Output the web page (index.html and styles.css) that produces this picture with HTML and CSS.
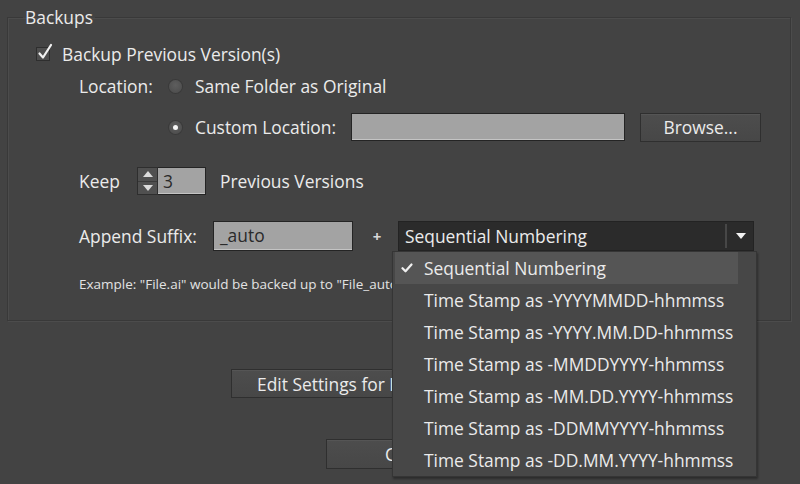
FILE: index.html
```html
<!DOCTYPE html>
<html>
<head>
<meta charset="utf-8">
<link rel="stylesheet" href="styles.css">
</head>
<body>
<fieldset class="group">
  <legend class="group-title">Backups</legend>
  <div class="row row-check">
    <span class="checkbox"><svg class="check-svg" width="18" height="20" viewBox="0 0 18 20"><path d="M3.5 11.5 L7 15.5 L15 3" fill="none" stroke="#f2f2f2" stroke-width="2.2" stroke-linecap="round" stroke-linejoin="round"/></svg></span>
    <span>Backup Previous Version(s)</span>
  </div>
  <div class="row row-loc1">
    <span class="loc-label">Location:</span>
    <span class="radio"></span>
    <span>Same Folder as Original</span>
  </div>
  <div class="row row-loc2">
    <span class="loc-label"></span>
    <span class="radio selected"></span>
    <span class="custom-label">Custom Location:</span>
    <span class="input path-input"></span>
    <span class="button browse">Browse...</span>
  </div>
  <div class="row row-keep">
    <span class="keep-label">Keep</span>
    <span class="spinner">
      <span class="spin-arrows">
        <span class="spin spin-up"></span>
        <span class="spin spin-down"></span>
      </span>
      <span class="input spin-input">3</span>
    </span>
    <span>Previous Versions</span>
  </div>
  <div class="row row-suffix">
    <span class="suffix-label">Append Suffix:</span>
    <span class="input suffix-input">_auto</span>
    <span class="plus">+</span>
    <div class="dropdown">
      <span class="dropdown-value">Sequential Numbering</span>
      <span class="dropdown-sep"></span>
      <span class="dropdown-arrow"></span>
      <ul class="menu">
        <li class="menu-item selected"><span class="menu-check"><svg width="12" height="10" viewBox="0 0 12 10"><path d="M1.5 5.2 L4.5 8.3 L10.5 1.5" fill="none" stroke="#f0f0f0" stroke-width="2.2" stroke-linecap="round" stroke-linejoin="round"/></svg></span>Sequential Numbering</li>
        <li class="menu-item">Time Stamp as -YYYYMMDD-hhmmss</li>
        <li class="menu-item">Time Stamp as -YYYY.MM.DD-hhmmss</li>
        <li class="menu-item">Time Stamp as -MMDDYYYY-hhmmss</li>
        <li class="menu-item">Time Stamp as -MM.DD.YYYY-hhmmss</li>
        <li class="menu-item">Time Stamp as -DDMMYYYY-hhmmss</li>
        <li class="menu-item">Time Stamp as -DD.MM.YYYY-hhmmss</li>
      </ul>
    </div>
  </div>
  <div class="row example">Example: "File.ai" would be backed up to "File_auto-1.ai"</div>
</fieldset>
<div class="actions">
  <div class="button edit-btn">Edit Settings for Document Recovery...</div>
  <div class="button clear-btn">Clear</div>
</div>
</body>
</html>
```
FILE: styles.css
```css
html, body {
  margin: 0;
  padding: 0;
}
body {
  width: 800px;
  height: 484px;
  overflow: hidden;
  background: #434343;
  font-family: "Open Sans", "Liberation Sans", sans-serif;
  font-size: 17.4px;
  color: #ebebeb;
}
.group {
  margin: 7px 9px 0 7px;
  padding: 0 0 24px 0;
  border: 1px solid #393939;
  box-shadow: 1px 1px 0 #4c4c4c, inset 1px 1px 0 #4c4c4c;
  min-width: 0;
}
.group-title {
  margin-left: 15px;
  padding: 0 2px;
  line-height: 20px;
  font-size: 17.4px;
}
.row {
  display: flex;
  align-items: center;
  height: 28px;
  white-space: nowrap;
}
.row-check {
  margin-top: 13px;
  padding-left: 28px;
}
.checkbox {
  position: relative;
  width: 12px;
  height: 12px;
  border: 1px solid #2e2e2e;
  background: #4e4e4e;
  margin-right: 12px;
}
.check-svg {
  position: absolute;
  left: -1px;
  top: -6px;
}
.row-loc1 {
  margin-top: 4px;
  padding-left: 71px;
}
.row-loc2 {
  margin-top: 13px;
  padding-left: 71px;
}
.loc-label {
  width: 90px;
  flex: none;
}
.radio {
  width: 13px;
  height: 13px;
  border-radius: 50%;
  background: radial-gradient(circle at 50% 40%, #5e5e5e, #4a4a4a);
  box-shadow: 0 0 0 1px #3a3a3a;
  margin-right: 13px;
  flex: none;
  display: flex;
  align-items: center;
  justify-content: center;
}
.radio.selected::after {
  content: "";
  width: 5px;
  height: 5px;
  border-radius: 50%;
  background: #f4f4f4;
}
.custom-label {
  width: 156px;
  flex: none;
}
.input {
  box-sizing: border-box;
  background: #a3a3a3;
  border: 1px solid #242424;
  box-shadow: inset 0 -1px 0 #c4c4c4;
  color: #2a2a2a;
  flex: none;
}
.path-input {
  width: 274px;
  height: 28px;
  margin-right: 15px;
}
.button {
  box-sizing: border-box;
  background: linear-gradient(#4d4d4d, #474747);
  border: 1px solid #2f2f2f;
  box-shadow: inset 0 1px 0 #555555;
  color: #ebebeb;
  display: flex;
  align-items: center;
  flex: none;
  white-space: nowrap;
}
.browse {
  width: 121px;
  height: 29px;
  justify-content: center;
}
.row-keep {
  margin-top: 26px;
  padding-left: 71px;
}
.keep-label {
  width: 58px;
  flex: none;
}
.spinner {
  display: flex;
  height: 28px;
  margin-right: 14px;
  flex: none;
}
.spin-arrows {
  display: flex;
  flex-direction: column;
  width: 21px;
  box-sizing: border-box;
  border: 1px solid #2e2e2e;
  background: #505050;
}
.spin {
  flex: 1;
  display: flex;
  align-items: center;
  justify-content: center;
}
.spin-up {
  border-bottom: 1px solid #3a3a3a;
}
.spin-up::after {
  content: "";
  border-left: 5px solid transparent;
  border-right: 5px solid transparent;
  border-bottom: 6px solid #dcdcdc;
}
.spin-down::after {
  content: "";
  border-left: 5px solid transparent;
  border-right: 5px solid transparent;
  border-top: 6px solid #dcdcdc;
}
.spin-input {
  width: 48px;
  height: 28px;
  padding-left: 5px;
  line-height: 26px;
  border-left: none;
}
.row-suffix {
  margin-top: 26px;
  padding-left: 71px;
  height: 30px;
}
.suffix-label {
  width: 134px;
  flex: none;
}
.suffix-input {
  width: 140px;
  height: 30px;
  padding-left: 6px;
  line-height: 27px;
}
.plus {
  width: 45px;
  box-sizing: border-box;
  padding-left: 3px;
  text-align: center;
  font-size: 15px;
  font-weight: bold;
  color: #d8d8d8;
  flex: none;
}
.dropdown {
  position: relative;
  box-sizing: border-box;
  width: 356px;
  height: 30px;
  background: #2b2b2b;
  border: 1px solid #232323;
  display: flex;
  align-items: center;
  flex: none;
}
.dropdown-value {
  flex: 1;
  padding-left: 6px;
}
.dropdown-sep {
  width: 2px;
  height: 24px;
  background: #474747;
  margin-right: 9px;
}
.dropdown-arrow {
  width: 0;
  height: 0;
  border-left: 5px solid transparent;
  border-right: 5px solid transparent;
  border-top: 6px solid #f2f2f2;
  margin-right: 7px;
}
.menu {
  position: absolute;
  z-index: 10;
  left: -7px;
  top: calc(100% + 1px);
  width: 365px;
  box-sizing: border-box;
  margin: 0;
  padding: 0;
  list-style: none;
  background: #474747;
  border: 1px solid #353535;
  box-shadow: 1px 2px 2px rgba(0, 0, 0, 0.35);
}
.menu-item {
  display: flex;
  align-items: center;
  height: 32px;
  padding-left: 31px;
  color: #ebebeb;
}
.menu-item.selected {
  margin: 0 18px 0 2px;
  padding-left: 6px;
  background: #555555;
}
.menu-check {
  width: 23px;
  display: flex;
  align-items: center;
}
.example {
  margin-top: 21px;
  height: 24px;
  padding-left: 71px;
  font-size: 13.5px;
  color: #e2e2e2;
}
.actions {
  display: flex;
  flex-direction: column;
  align-items: flex-start;
}
.edit-btn {
  margin-top: 48px;
  margin-left: 231px;
  width: 338px;
  height: 29px;
  padding-left: 25px;
}
.clear-btn {
  margin-top: 41px;
  margin-left: 326px;
  width: 148px;
  height: 30px;
  padding-left: 58px;
}
```
